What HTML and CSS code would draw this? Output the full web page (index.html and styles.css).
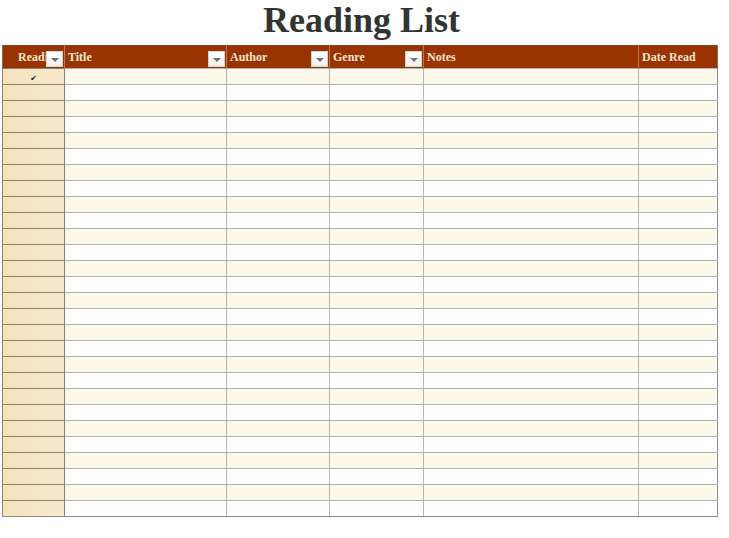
FILE: index.html
```html
<!DOCTYPE html>
<html>
<head>
<meta charset="utf-8">
<link rel="stylesheet" href="styles.css">
</head>
<body>
<h1 class="title">Reading List</h1>
<table class="list">
  <colgroup>
    <col class="c-read"><col class="c-title"><col class="c-author"><col class="c-genre"><col class="c-notes"><col class="c-date">
  </colgroup>
  <thead>
    <tr>
      <th class="h-read"><span class="label">Reading</span><span class="filter"></span></th>
      <th><span class="label">Title</span><span class="filter"></span></th>
      <th><span class="label">Author</span><span class="filter"></span></th>
      <th><span class="label">Genre</span><span class="filter"></span></th>
      <th><span class="label">Notes</span></th>
      <th><span class="label">Date Read</span></th>
    </tr>
  </thead>
  <tbody id="rows">
    <tr><td class="read"><span class="check">✔</span></td><td></td><td></td><td></td><td></td><td></td></tr>
  </tbody>
</table>
<script>
  var body = document.getElementById('rows');
  for (var i = 1; i < 28; i++) {
    var tr = document.createElement('tr');
    tr.innerHTML = '<td class="read"></td><td></td><td></td><td></td><td></td><td></td>';
    body.appendChild(tr);
  }
</script>
</body>
</html>
```
FILE: styles.css
```css
html, body {
  margin: 0;
  padding: 0;
  background: #ffffff;
}

.title {
  margin: 0;
  height: 45px;
  text-align: center;
  font-family: "Liberation Serif", serif;
  font-weight: bold;
  font-size: 36px;
  line-height: 40px;
  color: #333333;
  padding-right: 6px;
  box-sizing: border-box;
}

.list {
  margin-left: 2px;
  width: 715px;
  border-collapse: collapse;
  table-layout: fixed;
  font-family: "Liberation Serif", serif;
}

.c-read { width: 62px; }
.c-title { width: 162px; }
.c-author { width: 103px; }
.c-genre { width: 94px; }
.c-notes { width: 215px; }
.c-date { width: 79px; }

thead th {
  background: #993300;
  height: 22px;
  padding: 0;
  border-top: 1px solid #7a4a30;
  border-left: 1px solid #b87a55;
  border-right: 1px solid #b87a55;
  text-align: left;
  vertical-align: bottom;
  position: relative;
  overflow: hidden;
  white-space: nowrap;
}

thead th:first-child { border-left: 1px solid #8a6a55; }
thead th:last-child { border-right: 1px solid #8a6a55; }

.label {
  display: block;
  color: #f6e6cc;
  font-size: 12px;
  font-weight: bold;
  line-height: 14px;
  padding: 0 0 4px 3px;
}

.h-read .label { padding-left: 15px; }

.filter {
  position: absolute;
  right: 1px;
  bottom: 1px;
  width: 15px;
  height: 14px;
  background: linear-gradient(#ffffff, #f0f0f0);
  border: 1px solid #d4d4d4;
}

.filter::after {
  content: "";
  position: absolute;
  left: 4px;
  top: 6px;
  border-left: 4px solid transparent;
  border-right: 4px solid transparent;
  border-top: 4px solid #707070;
}

tbody td {
  height: 15px;
  padding: 0;
  border: 1px solid #b4b4b4;
}

tbody tr:nth-child(odd) td { background: #fbf7e9; }
tbody tr:nth-child(even) td { background: #ffffff; }

tbody tr td.read {
  background: linear-gradient(90deg, #f4e2bc, #f6e9cc);
  border-color: #8c8070;
  text-align: center;
}

tbody td:last-child { border-right: 1px solid #8c8c8c; }
tbody tr:last-child td { border-bottom: 1px solid #8c8c8c; }

.check {
  font-family: "DejaVu Sans", sans-serif;
  font-size: 8px;
  line-height: 15px;
  padding-top: 2px;
  color: #222;
  display: block;
  height: 13px;
  overflow: hidden;
}
```
